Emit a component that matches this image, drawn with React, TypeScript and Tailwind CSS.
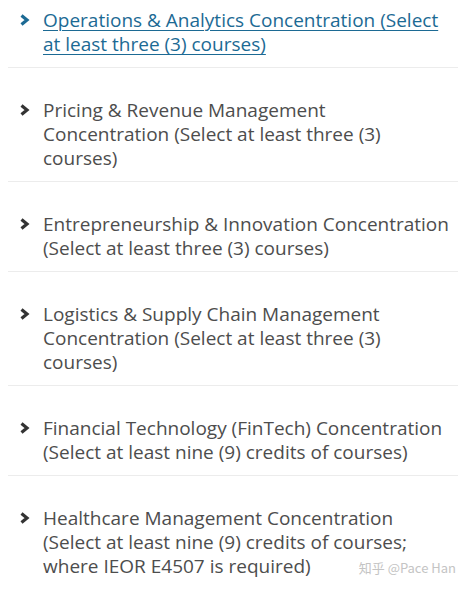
import { Fragment } from 'react'

const items = [
  { lines: ['Operations & Analytics Concentration (Select', 'at least three (3) courses)'], active: true },
  { lines: ['Pricing & Revenue Management', 'Concentration (Select at least three (3)', 'courses)'] },
  { lines: ['Entrepreneurship & Innovation Concentration', '(Select at least three (3) courses)'] },
  { lines: ['Logistics & Supply Chain Management', 'Concentration (Select at least three (3)', 'courses)'] },
  { lines: ['Financial Technology (FinTech) Concentration', '(Select at least nine (9) credits of courses)'] },
  {
    lines: [
      'Healthcare Management Concentration',
      '(Select at least nine (9) credits of courses;',
      'where IEOR E4507 is required)',
    ],
  },
]

function Chevron({ active }: { active?: boolean }) {
  return (
    <svg width="11" height="12" viewBox="0 0 11 12" className="mt-[6px] shrink-0">
      <path
        d="M2.5 1.5 L8 6 L2.5 10.5"
        fill="none"
        stroke={active ? '#1c6a94' : '#333333'}
        strokeWidth="3.2"
        strokeLinejoin="miter"
      />
    </svg>
  )
}

export default function App() {
  return (
    <div className="relative h-[591px] w-[466px] overflow-hidden bg-white font-['Open_Sans',sans-serif]">
      <ul className="px-2">
        {items.map((item, i) => (
          <Fragment key={i}>
            <li className={`flex gap-[13px] pl-[11px] pr-2 pb-[11px] ${i === 0 ? 'pt-[8px]' : 'pt-[30px]'}`}>
              <Chevron active={item.active} />
              <div
                className={`text-[19px] leading-[24px] whitespace-nowrap ${
                  item.active ? 'text-[#1c6a94]' : 'text-[#4d4d4d]'
                }`}
              >
                {item.lines.map((line, j) => (
                  <div key={j}>
                    <span className={item.active ? 'underline decoration-1 underline-offset-[3px]' : ''}>{line}</span>
                  </div>
                ))}
              </div>
            </li>
            {i < items.length - 1 ? <li className="h-px bg-[#ececec]" /> : null}
          </Fragment>
        ))}
      </ul>
      <div className="absolute bottom-[14px] right-[10px] text-[13px] text-[#c4c4c4] font-['Noto_Sans_CJK_SC',sans-serif]">
        知乎 @Pace Han
      </div>
    </div>
  )
}
